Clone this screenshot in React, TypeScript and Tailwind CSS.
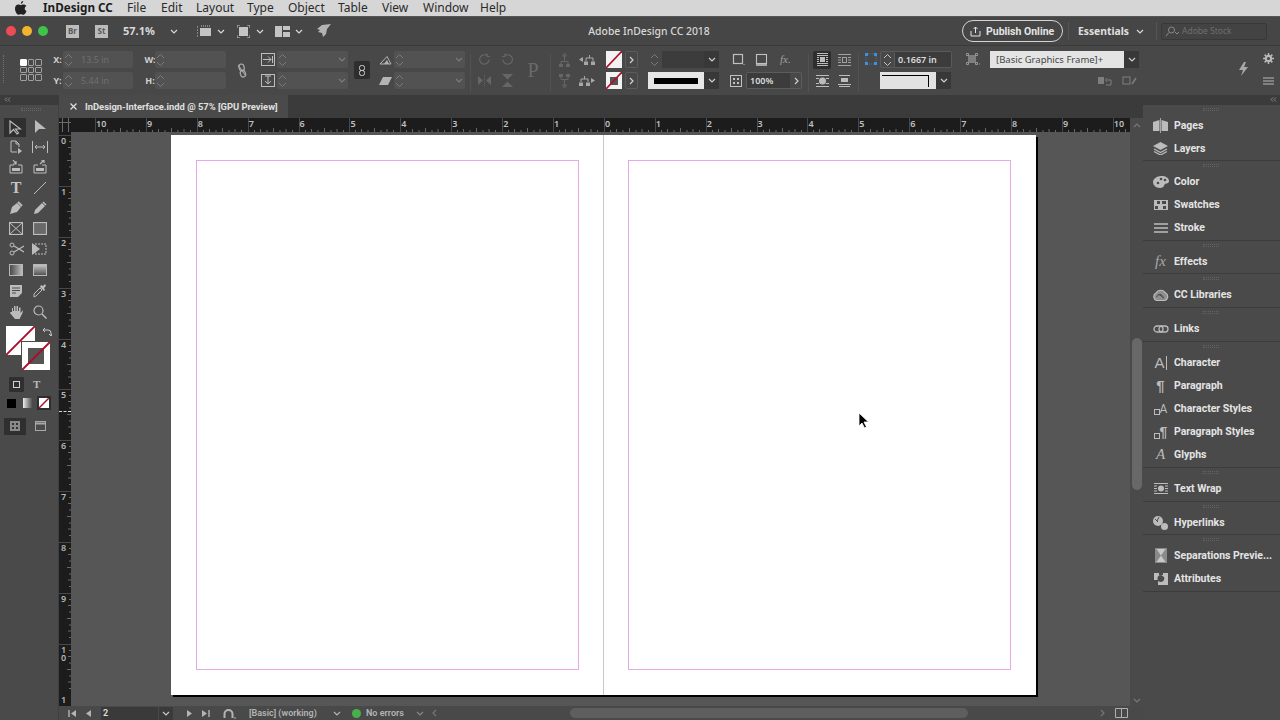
import type { ReactNode } from "react";

const menu: [string, number][] = [
  ["File", 34],
  ["Edit", 35],
  ["Layout", 51],
  ["Type", 41],
  ["Object", 50],
  ["Table", 44],
  ["View", 41],
  ["Window", 57],
  ["Help", 40],
];

function Svg({ w, h, children, className = "" }: { w: number; h: number; children: ReactNode; className?: string }) {
  return (
    <svg width={w} height={h} viewBox={`0 0 ${w} ${h}`} fill="none" stroke="currentColor" className={`shrink-0 ${className}`}>
      {children}
    </svg>
  );
}

function Chev({ className = "" }: { className?: string }) {
  return (
    <Svg w={8} h={5} className={className}>
      <path d="M1 1l3 3 3-3" strokeWidth="1.2" />
    </Svg>
  );
}

function Spin({ dim = false }: { dim?: boolean }) {
  return (
    <Svg w={9} h={14} className={dim ? "text-[#7a7a7a]" : "text-[#c4c4c4]"}>
      <path d="M1 5l3.5-3.5L8 5M1 9l3.5 3.5L8 9" strokeWidth="1" />
    </Svg>
  );
}

function Field({ w, value }: { w: string; value?: string }) {
  return (
    <div className={`h-[17px] ${w} bg-[#525252] rounded-[2px] flex items-center pl-[1px]`}>
      <Spin dim />
      {value && <span className="ml-[8px] text-[9px] text-[#6f6f6f]">{value}</span>}
    </div>
  );
}

function DropField({ w }: { w: string }) {
  return (
    <div className={`h-[17px] ${w} bg-[#525252] rounded-[2px] flex items-center justify-between pl-[1px] pr-[2px]`}>
      <Spin dim />
      <Chev className="text-[#7c7c7c]" />
    </div>
  );
}

function Sep({ className = "" }: { className?: string }) {
  return <div className={`w-[1px] h-[38px] bg-[#525252] self-center shrink-0 ${className}`} />;
}

function Pair({ className, children }: { className: string; children: ReactNode }) {
  return <div className={`flex flex-col gap-[4px] shrink-0 ${className}`}>{children}</div>;
}

function Cell({ children }: { children: ReactNode }) {
  return <div className="h-[17px] flex items-center justify-center">{children}</div>;
}

function NoneSwatch({ inner = false }: { inner?: boolean }) {
  return (
    <Svg w={16} h={17}>
      <rect width="16" height="17" fill="#f2f2f2" stroke="none" />
      {inner && <rect x="4" y="5" width="8" height="8" fill="#555" stroke="none" />}
      <path d="M0 17L16 0" stroke="#b0102a" strokeWidth="1.6" />
    </Svg>
  );
}

function ArrowBtn() {
  return (
    <div className="h-[17px] w-[13px] border border-[#5c5c5c] rounded-[2px] flex items-center justify-center text-[#d0d0d0]">
      <Svg w={5} h={8}>
        <path d="M1 1l3 3-3 3" strokeWidth="1.2" />
      </Svg>
    </div>
  );
}

function DarkChev() {
  return (
    <div className="h-[17px] w-[15px] bg-[#383838] flex items-center justify-center text-[#d0d0d0]">
      <Chev />
    </div>
  );
}

function TopBar() {
  return (
    <div className="h-[29px] bg-[#464646] border-b border-[#3a3a3a] flex items-center text-[#d8d8d8] font-['Noto_Sans',sans-serif]">
      <div className="flex gap-[6px] ml-[6px]">
        <div className="size-[10px] rounded-full bg-[#ee4b54]" />
        <div className="size-[10px] rounded-full bg-[#f2b32e]" />
        <div className="size-[10px] rounded-full bg-[#3fc34b]" />
      </div>
      <div className="ml-[18px] size-[13px] bg-[#bcbcbc] text-[#595959] text-[8px] font-bold flex items-center justify-center">Br</div>
      <div className="ml-[16px] size-[13px] bg-[#bcbcbc] text-[#595959] text-[8px] font-bold flex items-center justify-center">St</div>
      <span className="ml-[15px] w-[47px] text-[11px] font-bold">57.1%</span>
      <Chev />
      <Svg w={15} h={12} className="ml-[19px] text-[#c4c4c4]">
        <rect x="3" y="3" width="11" height="8" fill="currentColor" stroke="none" />
        <path d="M0 2h2M0 5h2M0 8h2M0 11h2M4 1h9" strokeDasharray="1 1" />
      </Svg>
      <Chev className="ml-[5px]" />
      <Svg w={13} h={13} className="ml-[12px] text-[#c4c4c4]">
        <rect x="2" y="2" width="9" height="9" fill="currentColor" stroke="none" />
        <path d="M0 3V0h3M10 0h3v3M13 10v3h-3M3 13H0v-3" />
      </Svg>
      <Chev className="ml-[6px]" />
      <Svg w={15} h={11} className="ml-[11px] text-[#c4c4c4]">
        <path d="M0 0h7v11H0zM8 0h7v4H8zM8 6h7v5H8z" fill="currentColor" stroke="none" />
      </Svg>
      <Chev className="ml-[5px]" />
      <Svg w={15} h={14} className="ml-[13px] text-[#b4b4b4]">
        <path d="M15 0L6 1 1 5l3 1-2 2 4 1 1 4 3-3 1-5z" fill="currentColor" stroke="none" />
      </Svg>
      <span className="ml-[257px] pt-[1px] text-[10.4px] w-[122px] text-center font-medium whitespace-nowrap">Adobe InDesign CC 2018</span>
      <div className="ml-[252px] w-[101px] h-[22px] border border-[#d4d4d4] rounded-full flex items-center pl-[7px] gap-[5px] text-[10.5px] font-bold text-[#e4e4e4] font-['Roboto',sans-serif]">
        <Svg w={11} h={11}>
          <path d="M1 5v5h9V5M5.5 7V1M3.5 3l2-2 2 2" />
        </Svg>
        <span className="pt-[1px]">Publish Online</span>
      </div>
      <div className="ml-[5px] w-[1px] h-[18px] bg-[#555]" />
      <span className="ml-[9px] pt-[1px] text-[10.3px] font-bold text-[#e0e0e0] w-[58px]">Essentials</span>
      <Chev />
      <div className="ml-[12px] w-[1px] h-[18px] bg-[#555]" />
      <div className="ml-[4px] w-[106px] h-[17px] bg-[#434343] border border-[#383838] rounded-[2px] flex items-center px-[3px] gap-[3px] text-[#8a8a8a]">
        <Svg w={14} h={11}>
          <circle cx="6.5" cy="4" r="3" />
          <path d="M4 6.5L1 10M10 6l2 2 2-2" />
        </Svg>
        <span className="text-[8.5px] text-[#6e6e6e]">Adobe Stock</span>
      </div>
    </div>
  );
}

function ControlPanel() {
  return (
    <div className="h-[49px] bg-[#484848] flex pt-[5px] text-[#c6c6c6] font-['Noto_Sans',sans-serif]">
      <div className="ml-[3px] w-[3px] h-[28px] mt-[4px] border-l border-dotted border-[#707070] shrink-0" />
      <div className="ml-[14px] mt-[8px] w-[22px] h-[22px] grid grid-cols-3 gap-[1px] shrink-0">
        {[0, 1, 2, 3, 4, 5, 6, 7, 8].map((i) => (
          <div key={i} className={`border border-[#a0a0a0] rounded-[1px] ${i === 0 ? "bg-white border-white" : ""}`} />
        ))}
      </div>
      <Pair className="ml-[10px] w-[11px] text-[9px] font-bold text-[#d0d0d0]">
        <Cell>X:</Cell>
        <Cell>Y:</Cell>
      </Pair>
      <Pair className="w-[70px]">
        <Field w="w-[70px]" value="13.5 in" />
        <Field w="w-[70px]" value="5.44 in" />
      </Pair>
      <Pair className="ml-[12px] w-[10px] text-[9px] font-bold text-[#d0d0d0]">
        <Cell>W:</Cell>
        <Cell>H:</Cell>
      </Pair>
      <Pair className="w-[71px]">
        <Field w="w-[71px]" />
        <Field w="w-[71px]" />
      </Pair>
      <div className="ml-[10px] w-[12px] flex items-center h-[38px] shrink-0 text-[#a8a8a8]">
        <Svg w={12} h={15}>
          <rect x="3" y="1" width="5" height="6.500" rx="2.500" transform="rotate(-15 6 4)" strokeWidth="1.300" />
          <rect x="4.500" y="7.500" width="5" height="6.500" rx="2.500" transform="rotate(-15 7 11)" strokeWidth="1.300" />
          <path d="M2 2l8 11" strokeWidth="1.100" />
        </Svg>
      </div>
      <Pair className="ml-[13px] w-[14px] text-[#bdbdbd]">
        <Cell>
          <Svg w={14} h={13}>
            <rect x="0.5" y="0.5" width="13" height="12" />
            <path d="M2 6.5h8M7 3.5l3 3-3 3M11.5 3v7" />
          </Svg>
        </Cell>
        <Cell>
          <Svg w={14} h={13}>
            <rect x="0.5" y="0.5" width="13" height="12" />
            <path d="M7 2v8M4 7l3 3 3-3M4 2h6" />
          </Svg>
        </Cell>
      </Pair>
      <Pair className="ml-[2px] w-[71px]">
        <DropField w="w-[71px]" />
        <DropField w="w-[71px]" />
      </Pair>
      <div className="ml-[6px] w-[16px] h-[18px] mt-[10px] bg-[#2e2e2e] rounded-[2px] flex items-center justify-center text-[#d0d0d0] shrink-0">
        <Svg w={6} h={11}>
          <rect x=".5" y=".5" width="5" height="5" rx="2" />
          <rect x=".5" y="5.500" width="5" height="5" rx="2" />
        </Svg>
      </div>
      <Pair className="ml-[9px] w-[13px] text-[#b4b4b4]">
        <Cell>
          <Svg w={13} h={10}>
            <path d="M1 9h11L8 1.5z" />
            <path d="M5 9l3-4 2 4z" fill="currentColor" stroke="none" />
          </Svg>
        </Cell>
        <Cell>
          <Svg w={13} h={10}>
            <path d="M4 1h9l-4 8H0z" fill="currentColor" stroke="none" />
          </Svg>
        </Cell>
      </Pair>
      <Pair className="ml-[2px] w-[71px]">
        <DropField w="w-[71px]" />
        <DropField w="w-[71px]" />
      </Pair>
      <Sep className="ml-[5px]" />
      <Pair className="ml-[7px] w-[13px] text-[#666]">
        <Cell>
          <Svg w={13} h={13}>
            <path d="M11 6.5a4.7 4.7 0 1 1-1.5-3.5M9 .5v3h3" strokeWidth="1.2" />
          </Svg>
        </Cell>
        <Cell>
          <Svg w={13} h={11}>
            <path d="M0 1v9l5-4.5zM13 1v9L8 5.5z" fill="currentColor" stroke="none" />
            <path d="M6.5 0v11" strokeDasharray="1 1" />
          </Svg>
        </Cell>
      </Pair>
      <Pair className="ml-[9px] w-[14px] text-[#666]">
        <Cell>
          <Svg w={13} h={13}>
            <path d="M2 6.5a4.7 4.7 0 1 0 1.5-3.5M4 .5v3H1" strokeWidth="1.2" />
          </Svg>
        </Cell>
        <Cell>
          <Svg w={13} h={13}>
            <path d="M1 0h11L6.5 5.5zM1 13h11L6.5 7.5z" fill="currentColor" stroke="none" />
          </Svg>
        </Cell>
      </Pair>
      <div className="ml-[8px] w-[22px] h-[38px] flex items-center justify-center text-[20px] text-[#6a6a6a] font-['Liberation_Serif',serif] shrink-0">P</div>
      <Sep className="ml-[6px]" />
      <Pair className="ml-[7px] w-[13px] text-[#666]">
        <Cell>
          <Svg w={11} h={14}>
            <path d="M5.500 0l2 3h-4zM5.500 3v5M2 11V8.500h7V11" />
            <path d="M0 11h4v3H0zM7 11h4v3H7z" fill="currentColor" stroke="none" />
          </Svg>
        </Cell>
        <Cell>
          <Svg w={11} h={14}>
            <path d="M5.500 14l2-3h-4zM5.500 11V6M2 3v2.500h7V3" />
            <path d="M0 0h4v3H0zM7 0h4v3H7z" fill="currentColor" stroke="none" />
          </Svg>
        </Cell>
      </Pair>
      <Pair className="ml-[7px] w-[17px] text-[#a8a8a8]">
        <Cell>
          <Svg w={16} h={10}>
            <path d="M4 2L0 4.500 4 7z" fill="currentColor" stroke="none" />
            <path d="M7 6V3h7v3M10.500 3V0" />
            <path d="M5 6.500h4V10H5zM12 6.500h4V10h-4z" fill="currentColor" stroke="none" />
          </Svg>
        </Cell>
        <Cell>
          <Svg w={16} h={10}>
            <path d="M12 2l4 2.500L12 7z" fill="currentColor" stroke="none" />
            <path d="M2 6V3h7v3M5.500 3V0" />
            <path d="M0 6.500h4V10H0zM7 6.500h4V10H7z" fill="currentColor" stroke="none" />
          </Svg>
        </Cell>
      </Pair>
      <Pair className="ml-[11px] w-[16px]">
        <NoneSwatch />
        <NoneSwatch inner />
      </Pair>
      <Pair className="ml-[3px] w-[13px]">
        <ArrowBtn />
        <ArrowBtn />
      </Pair>
      <Pair className="ml-[10px] w-[71px]">
        <div className="h-[17px] flex items-center">
          <div className="w-[14px] flex justify-center">
            <Spin dim />
          </div>
          <div className="w-[43px] h-[17px] bg-[#3c3c3c]" />
          <DarkChev />
        </div>
        <div className="h-[17px] flex items-center">
          <div className="w-[56px] h-[17px] bg-[#e6e6e6] flex items-center justify-center">
            <div className="w-[44px] h-[6px] bg-black" />
          </div>
          <DarkChev />
        </div>
      </Pair>
      <Pair className="ml-[11px] w-[72px] text-[#c0c0c0]">
        <div className="h-[17px] flex items-center pl-[2px] gap-[10px]">
          <Svg w={13} h={13}>
            <rect x="1.500" y="1.500" width="9" height="9" strokeWidth="1.200" />
            <path d="M11.500 11.500h1" />
          </Svg>
          <Svg w={13} h={13}>
            <rect x="1.500" y="1.500" width="10" height="9" strokeWidth="1.100" />
            <path d="M1 12h11" strokeWidth="1.600" />
          </Svg>
          <span className="text-[11px] italic text-[#a0a0a0] font-['Liberation_Serif',serif] ml-[2px]">fx.</span>
        </div>
        <div className="h-[17px] flex items-center">
          <Svg w={12} h={12}>
            <rect x="0.5" y="0.5" width="11" height="11" />
            <path d="M3 3h2v2H3zM7 3h2v2H7zM3 7h2v2H3zM7 7h2v2H7z" fill="currentColor" stroke="none" />
          </Svg>
          <div className="ml-[4px] w-[56px] h-[17px] border border-[#5c5c5c] rounded-[2px] flex items-center">
            <span className="w-[43px] h-full bg-[#3c3c3c] pl-[3px] text-[9px] font-semibold text-[#dcdcdc] leading-[15px]">100%</span>
            <Svg w={5} h={8} className="ml-[4px] text-[#d0d0d0]">
              <path d="M1 1l3 3-3 3" strokeWidth="1.2" />
            </Svg>
          </div>
        </div>
      </Pair>
      <Sep className="ml-[6px]" />
      <Pair className="ml-[4px] w-[40px] text-[#bcbcbc]">
        <div className="h-[17px] flex items-center">
          <div className="w-[18px] h-[18px] bg-[#2e2e2e] rounded-[2px] flex items-center justify-center">
            <Svg w={11} h={13}>
              <path d="M0 .5h11M0 2.500h11M0 10.500h11M0 12.500h11M0 4.500h2M0 6.500h2M0 8.500h2M9 4.500h2M9 6.500h2M9 8.500h2" />
              <rect x="3" y="4" width="5" height="5" fill="currentColor" stroke="none" />
            </Svg>
          </div>
          <Svg w={13} h={12} className="ml-[7px] text-[#a0a0a0]">
            <path d="M0 .5h13M0 11.500h13M0 3.500h3M0 6h3M0 8.500h3M10 3.500h3M10 6h3M10 8.500h3" />
            <rect x="4.500" y="3.500" width="4" height="5" />
          </Svg>
        </div>
        <div className="h-[17px] flex items-center">
          <Svg w={13} h={12} className="ml-[3px]">
            <path d="M0 .5h13M0 11.500h13M0 3.500h3M0 8.500h3M10 3.500h3M10 8.500h3" />
            <circle cx="6.500" cy="6" r="3.500" fill="currentColor" stroke="none" />
          </Svg>
          <Svg w={13} h={12} className="ml-[9px]">
            <path d="M1 .5h11M1 11.500h11M0 9.500h13" />
            <rect x="3" y="3" width="7" height="4" fill="currentColor" stroke="none" />
          </Svg>
        </div>
      </Pair>
      <Sep className="ml-[5px]" />
      <div className="ml-[6px] mt-[2px] shrink-0 text-[#3f8fe0]">
        <Svg w={12} h={12}>
          <path d="M1 1h10v10H1z" strokeDasharray="1 1" opacity=".6" />
          <path d="M0 0h3v3H0zM9 0h3v3H9zM0 9h3v3H0zM9 9h3v3H9z" fill="currentColor" stroke="none" />
        </Svg>
      </div>
      <Pair className="ml-[3px] w-[72px]">
        <div className="h-[17px] border border-[#5a5a5a] rounded-[2px] flex items-center">
          <div className="w-[14px] flex justify-center border-r border-[#5a5a5a]">
            <Spin />
          </div>
          <div className="h-[15px] flex-1 bg-[#3c3c3c] pl-[3px] text-[9px] font-semibold text-[#dcdcdc] leading-[15px]">0.1667 in</div>
        </div>
        <div className="h-[17px] flex items-center">
          <div className="w-[56px] h-[17px] bg-[#e2e2e2] pl-[2px] pt-[3px] pr-[7px]">
            <div className="h-[12px] border-t border-r border-black" />
          </div>
          <DarkChev />
        </div>
      </Pair>
      <div className="ml-[14px] mt-[2px] shrink-0 text-[#969696]">
        <Svg w={14} h={13}>
          <rect x="2" y="2" width="8" height="8" fill="currentColor" stroke="none" opacity=".7" />
          <path d="M.5.5h2v2h-2zM9.500.5h2v2h-2zM.5 9.500h2v2h-2zM9.500 9.500h2v2h-2zM13 11h1" />
        </Svg>
      </div>
      <Pair className="ml-[10px] w-[149px]">
        <div className="h-[17px] flex">
          <div className="w-[134px] bg-[#e4e4e4] pl-[6px] text-[9.5px] text-[#444] leading-[17px]">[Basic Graphics Frame]+</div>
          <DarkChev />
        </div>
        <div className="h-[17px] flex items-center text-[#7e7e7e] pl-[108px] gap-[9px]">
          <Svg w={15} h={11}>
            <rect x="0" y="2" width="6" height="7" fill="currentColor" stroke="none" />
            <path d="M9 5h4v5H8M9 3L7.500 5 9 7" />
          </Svg>
          <Svg w={15} h={11}>
            <rect x="1" y="2" width="7" height="7" />
            <path d="M10 9l4-6" strokeWidth="1.5" />
          </Svg>
        </div>
      </Pair>
      <div className="ml-[100px] w-[12px] mt-[11px] shrink-0 text-[#a8a8a8]">
        <Svg w={10} h={14}>
          <path d="M5 0L0 8h4l-2 6 7-9H5l2-5z" fill="currentColor" stroke="none" />
        </Svg>
      </div>
      <div className="ml-[10px] w-[14px] h-[36px] flex flex-col items-center justify-between py-[2px] text-[#b8b8b8] shrink-0">
        <Svg w={11} h={11}>
          <circle cx="5.500" cy="5.500" r="2.700" strokeWidth="2.200" />
          <path d="M5.500 0v2M5.500 9v2M0 5.500h2M9 5.500h2M1.600 1.600L3 3M8 8l1.400 1.400M1.600 9.400L3 8M8 3l1.400-1.400" strokeWidth="1.500" />
        </Svg>
        <Svg w={11} h={8}>
          <path d="M0 1h11M0 4h11M0 7h11" />
        </Svg>
      </div>
    </div>
  );
}

function ToolIcon({ children }: { children: ReactNode }) {
  return <div className="w-[24px] flex items-center justify-center">{children}</div>;
}

const toolRows: { h: string; icons: [ReactNode, ReactNode] }[] = [
  {
    h: "h-[20px]",
    icons: [
      <Svg w={14} h={15} key="a"><path d="M2 1v12l3.500-3.500L9 14l1.500-1-3-4h5z" strokeWidth="1.200" /></Svg>,
      <Svg w={12} h={14} key="b"><path d="M1 0v13l4-4h7z" fill="currentColor" stroke="none" /></Svg>,
    ],
  },
  {
    h: "h-[19px]",
    icons: [
      <Svg w={14} h={14} key="a"><path d="M8 12H2V1h5l3 3v3M7 1v3h3" /><path d="M9 8v6l4-3z" fill="currentColor" stroke="none" /></Svg>,
      <Svg w={16} h={12} key="b"><path d="M.5 0v12M15.500 0v12M3 6h10M5 4L3 6l2 2M11 4l2 2-2 2" /></Svg>,
    ],
  },
  {
    h: "h-[21px]",
    icons: [
      <Svg w={14} h={14} key="a"><path d="M1 5v8h12V5H9M5 5H1" /><path d="M3 8h8v3H3z" fill="currentColor" stroke="none" /><path d="M4 0l3 4M7 1v3H4" strokeWidth="1.200" /></Svg>,
      <Svg w={14} h={14} key="b"><path d="M1 5v8h12V5H9M5 5H1" /><path d="M3 8h8v3H3z" fill="currentColor" stroke="none" /><path d="M7 4l4-4M8 0h3v3" strokeWidth="1.200" /></Svg>,
    ],
  },
  {
    h: "h-[21px]",
    icons: [
      <span key="a" className="text-[16px] leading-none font-bold text-[#c4c4c4] font-['Liberation_Serif',serif]">T</span>,
      <Svg w={12} h={12} key="b"><path d="M0 12L12 0" /></Svg>,
    ],
  },
  {
    h: "h-[20px]",
    icons: [
      <Svg w={14} h={14} key="a"><path d="M1 13l2-7 5-4 4 4-4 5z" fill="currentColor" stroke="none" /><path d="M9 1l4 4" strokeWidth="2" /></Svg>,
      <Svg w={14} h={14} key="b"><path d="M1 13l1-4 7-7 3 3-7 7z" fill="currentColor" stroke="none" /><path d="M10 1l3 3" strokeWidth="1.500" /></Svg>,
    ],
  },
  {
    h: "h-[20px]",
    icons: [
      <Svg w={14} h={13} key="a"><rect x=".5" y=".5" width="13" height="12" strokeWidth="1.200" /><path d="M1 1l12 11M13 1L1 12" /></Svg>,
      <Svg w={14} h={13} key="b"><rect x=".5" y=".5" width="13" height="12" fill="#6a6a6a" strokeWidth="1.200" /></Svg>,
    ],
  },
  {
    h: "h-[21px]",
    icons: [
      <Svg w={15} h={14} key="a"><circle cx="3" cy="3" r="2" /><circle cx="3" cy="11" r="2" /><path d="M5 4l10 6M5 10l10-6" strokeWidth="1.200" /></Svg>,
      <Svg w={16} h={14} key="b"><rect x="3" y="2" width="11" height="10" strokeDasharray="2 1" /><path d="M0 1l8 6-8 6z" fill="currentColor" stroke="none" /></Svg>,
    ],
  },
  {
    h: "h-[21px]",
    icons: [
      <div key="a" className="w-[14px] h-[12px] border border-[#b8b8b8] bg-gradient-to-r from-[#4a4a4a] to-[#bdbdbd]" />,
      <div key="b" className="w-[14px] h-[12px] border border-[#b8b8b8] bg-gradient-to-b from-[#c4c4c4] to-[#555]" />,
    ],
  },
  {
    h: "h-[22px]",
    icons: [
      <Svg w={12} h={12} key="a"><path d="M0 0h12v8l-4 4H0z" fill="currentColor" stroke="none" /><path d="M2 3h8M2 5.500h8M2 8h4" stroke="#4a4a4a" /></Svg>,
      <Svg w={14} h={14} key="b"><path d="M1 13l2-1 6-6-2-2-6 6z" /><path d="M7 3l4 4 1-1-1-2 2-2-1-2-2 2-2-1z" fill="currentColor" stroke="none" /></Svg>,
    ],
  },
  {
    h: "h-[19px]",
    icons: [
      <Svg w={14} h={14} key="a"><path d="M3 7V3h1v3h1V1h1.500v5h1V1H9v5h1V2.500h1.500V8L14 5l-.5 3-3 6H6L1 8l.5-1z" fill="currentColor" stroke="none" /></Svg>,
      <Svg w={14} h={14} key="b"><circle cx="5.500" cy="5.500" r="4.500" strokeWidth="1.200" /><path d="M9 9l4.500 4.500" strokeWidth="1.500" /></Svg>,
    ],
  },
];

function ToolPanel() {
  return (
    <div className="flex-1 bg-[#4a4a4a] border-r border-[#404040] text-[#bcbcbc] pl-[4px] relative font-['Noto_Sans',sans-serif]">
      <div className="w-[20px] mx-auto mt-[3px] mb-[6px] h-[3px] border-y border-dotted border-[#666]" />
      <div className="flex flex-col">
        {toolRows.map((row, i) => (
          <div key={i} className={`flex items-center ${row.h}`}>
            <ToolIcon>{row.icons[0]}</ToolIcon>
            <ToolIcon>{row.icons[1]}</ToolIcon>
          </div>
        ))}
      </div>
      <div className="absolute left-[4px] top-[13px] w-[22px] h-[19px] bg-[#2f2f2f] flex items-center justify-center">
        <Svg w={14} h={15}>
          <path d="M2 1v12l3.500-3.500L9 14l1.500-1-3-4h5z" strokeWidth="1.200" />
        </Svg>
      </div>
      <div className="mt-[5px] ml-[2px]">
        <Svg w={46} h={46}>
          <rect x="0" y="0" width="29" height="29" fill="#fff" stroke="none" />
          <path d="M0 29L29 0" stroke="#a80f26" strokeWidth="1.800" />
          <rect x="15.500" y="15.500" width="29" height="29" fill="#fff" stroke="#4a4a4a" />
          <rect x="22" y="22" width="16" height="16" fill="#555" stroke="none" />
          <path d="M16 44L44 16" stroke="#a80f26" strokeWidth="1.800" />
        </Svg>
      </div>
      <div className="flex items-center h-[18px] mt-[3px] pl-[5px] gap-[9px]">
        <div className="size-[15px] bg-[#2f2f2f] flex items-center justify-center rounded-[1px]">
          <div className="size-[7px] border border-[#d0d0d0]" />
        </div>
        <span className="text-[11px] font-bold font-['Liberation_Serif',serif]">T</span>
      </div>
      <div className="flex items-center h-[18px] mt-[1px] pl-[3px]">
        <div className="size-[9px] bg-black" />
        <div className="ml-[7px] w-[10px] h-[10px] bg-gradient-to-r from-[#eee] to-[#444]" />
        <div className="ml-[4px] size-[14px] bg-[#2f2f2f] flex items-center justify-center">
          <NoneMini />
        </div>
      </div>
      <div className="flex items-center h-[20px] mt-[4px]">
        <div className="w-[22px] h-[17px] bg-[#2f2f2f] flex items-center justify-center">
          <Svg w={10} h={10}>
            <rect width="10" height="10" fill="#8a8a8a" stroke="none" />
            <path d="M2 2h2v2H2zM6 2h2v2H6zM2 6h2v2H2zM6 6h2v2H6z" fill="#333" stroke="none" />
          </Svg>
        </div>
        <Svg w={12} h={11} className="ml-[9px] text-[#a8a8a8]">
          <rect x=".5" y=".5" width="10" height="9" />
          <path d="M1 2.500h9" strokeWidth="2" />
        </Svg>
      </div>
      <div className="absolute left-[42px] top-[222px] text-[#c8c8c8]">
        <Svg w={10} h={10}>
          <path d="M1 3h5a3 3 0 0 1 3 3v3M3 1L1 3l2 2M7 7l2 2 1-2" />
        </Svg>
      </div>
    </div>
  );
}

function NoneMini() {
  return (
    <Svg w={10} h={10}>
      <rect width="10" height="10" fill="#fff" stroke="none" />
      <path d="M0 10L10 0" stroke="#b0102a" strokeWidth="1.500" />
    </Svg>
  );
}

const hRuler = ["10", "9", "8", "7", "6", "5", "4", "3", "2", "1", "0", "1", "2", "3", "4", "5", "6", "7", "8", "9", "10"];
const vRuler = ["0", "1", "2", "3", "4", "5", "6", "7", "8", "9", "10"];

function HTicks() {
  return (
    <svg width="51" height="14" className="absolute left-0 top-0" stroke="#686868">
      <path d="M6.500 14v-2M12.500 14v-3M19 14v-2M25.500 14v-4M32 14v-2M38 14v-3M44.500 14v-2" />
      <path d="M.5 14V0" stroke="#484848" />
    </svg>
  );
}

function VTicks() {
  return (
    <svg width="12" height="51" className="absolute left-0 top-0" stroke="#686868">
      <path d="M10 6.500h2M9 12.500h3M10 19h2M8 25.500h4M10 32h2M9 38h3M10 44.500h2" />
      <path d="M0 .5h12" stroke="#484848" />
    </svg>
  );
}

function Workspace() {
  return (
    <div className="flex-1 flex flex-col min-w-0 font-['Noto_Sans',sans-serif]">
      <div className="h-[23px] bg-[#3b3b3b] shrink-0 flex">
        <div className="w-[229px] bg-[#4a4a4a] flex items-center pl-[11px] text-[#e0e0e0]">
          <Svg w={7} h={7}>
            <path d="M.5.5l6 6M6.500.5l-6 6" strokeWidth="1.200" />
          </Svg>
          <span className="ml-[8px] pt-[1px] text-[9.4px] font-bold whitespace-nowrap font-['Roboto',sans-serif]">InDesign-Interface.indd @ 57% [GPU Preview]</span>
        </div>
      </div>
      <div className="h-[14px] flex shrink-0">
        <div className="w-[12px] bg-[#1c1c1c] relative text-[#6a6a6a]">
          <Svg w={12} h={14}>
            <path d="M0 4.500h12M3.500 0v14M9.500 0v14" />
          </Svg>
        </div>
        <div className="w-[1059px] bg-[#1c1c1c] flex overflow-hidden pl-[24px] text-[#c0c0c0]">
          {hRuler.map((n, i) => (
            <div key={i} className="w-[50.9px] shrink-0 relative text-[9px] font-semibold leading-[12px] pl-[1px]">
              <HTicks />
              <span className="relative">{n}</span>
            </div>
          ))}
        </div>
        <div className="w-[13px] bg-[#4a4a4a] flex items-center justify-center text-[#777]">
          <Svg w={8} h={5}>
            <path d="M1 4l3-3 3 3" strokeWidth="1.200" />
          </Svg>
        </div>
      </div>
      <div className="flex-1 flex min-h-0">
        <div className="w-[12px] bg-[#1c1c1c] pt-[3px] overflow-hidden text-[#b4b4b4] shrink-0 relative">
          {vRuler.map((n) => (
            <div key={n} className="h-[50.9px] relative pl-[2px] pt-[2px] text-[9px] font-semibold leading-[8px]">
              <VTicks />
              <span className="relative block w-[6px] break-all">{n}</span>
            </div>
          ))}
          <div className="h-[14px] pl-[2px] text-[9px] leading-[9px] font-semibold">1</div>
          <div className="absolute left-0 top-[279px] w-[12px] border-t border-dashed border-[#d8d8d8]" />
        </div>
        <div className="flex-1 bg-[#565656] pl-[100px] pt-[3px] overflow-hidden relative">
          <div className="w-[865px] h-[560px] bg-white flex shadow-[2px_2px_0_#000]">
            <div className="w-[433px] h-full pt-[25px] pl-[25px] pr-[24px] pb-[25px] border-r border-[#c8c8c8]">
              <div className="w-full h-full border border-[#e6a8e6]" />
            </div>
            <div className="w-[432px] h-full pt-[25px] pl-[24px] pr-[25px] pb-[25px]">
              <div className="w-full h-full border border-[#e6a8e6]" />
            </div>
          </div>
          <div className="absolute left-[787px] top-[280px] text-black">
            <svg width="12" height="17" viewBox="0 0 12 17">
              <path d="M1 1v13l3-3 2.500 5 2-1-2.500-5h4.500z" fill="#000" stroke="#fff" strokeWidth=".8" />
            </svg>
          </div>
        </div>
        <div className="w-[13px] bg-[#4a4a4a] shrink-0 flex flex-col items-center relative text-[#777]">
          <div className="w-[10px] h-[152px] bg-[#686868] rounded-full mt-[206px]" />
          <Svg w={8} h={5} className="mt-auto mb-[3px]">
            <path d="M1 1l3 3 3-3" strokeWidth="1.200" />
          </Svg>
        </div>
      </div>
      <div className="h-[14px] bg-[#494949] shrink-0 flex items-center text-[#b4b4b4] text-[8.5px] font-semibold font-['Roboto',sans-serif]">
        <Svg w={9} h={7} className="ml-[9px]">
          <path d="M1 0v7" strokeWidth="1.400" />
          <path d="M8 0v7L3 3.500z" fill="currentColor" stroke="none" />
        </Svg>
        <Svg w={6} h={7} className="ml-[9px]">
          <path d="M5 0v7L0 3.500z" fill="currentColor" stroke="none" />
        </Svg>
        <div className="ml-[9px] w-[57px] h-[13px] bg-[#3a3a3a] pl-[2px] text-[9px] text-[#e0e0e0] leading-[13px]">2</div>
        <div className="w-[14px] h-[13px] bg-[#3a3a3a] ml-[1px] flex items-center justify-center text-[#c8c8c8]">
          <Chev />
        </div>
        <Svg w={6} h={7} className="ml-[13px]">
          <path d="M1 0v7l5-3.500z" fill="currentColor" stroke="none" />
        </Svg>
        <Svg w={9} h={7} className="ml-[9px]">
          <path d="M8 0v7" strokeWidth="1.400" />
          <path d="M1 0v7l5-3.500z" fill="currentColor" stroke="none" />
        </Svg>
        <Svg w={13} h={11} className="ml-[13px]">
          <path d="M1.500 10V6a4 4 0 0 1 8 0v4" strokeWidth="2" />
          <path d="M11 10h2" />
        </Svg>
        <span className="ml-[13px] pt-[1px] w-[80px] text-[9px] whitespace-nowrap">[Basic] (working)</span>
        <Chev className="ml-[4px]" />
        <div className="ml-[11px] size-[9px] rounded-full bg-[#46b04a]" />
        <span className="ml-[5px] pt-[1px] w-[48px] text-[9px] whitespace-nowrap">No errors</span>
        <Chev className="ml-[2px] text-[#888]" />
        <Svg w={5} h={8} className="ml-[8px] text-[#777]">
          <path d="M4 1L1 4l3 3" strokeWidth="1.200" />
        </Svg>
        <div className="ml-[72px] flex-1 flex items-center h-[14px] bg-[#494949]">
          <div className="ml-[61px] w-[398px] h-[10px] rounded-full bg-[#5e5e5e]" />
        </div>
        <Svg w={5} h={8} className="mr-[10px] text-[#777]">
          <path d="M1 1l3 3-3 3" strokeWidth="1.200" />
        </Svg>
        <Svg w={13} h={10} className="mr-[15px] text-[#b0b0b0]">
          <path d="M.5.5h12v9H.5zM6.500.5v9" />
        </Svg>
      </div>
    </div>
  );
}

function CircleIcon({ children }: { children: ReactNode }) {
  return <div className="w-[23px] flex items-center justify-center text-[#bcbcbc] shrink-0">{children}</div>;
}

const panelGroups: { h: string; rows: [ReactNode, string][] }[] = [
  {
    h: "h-[56px]",
    rows: [
      [<Svg w={15} h={15} key="i"><path d="M0 4l6.500-2v11L0 13zM15 4L8.500 2v11l6.500 0z" fill="currentColor" stroke="none" /><path d="M7.500 0v15" strokeWidth=".8" /></Svg>, "Pages"],
      [<Svg w={15} h={13} key="i"><path d="M7.500 0L15 4 7.500 8 0 4z" fill="currentColor" stroke="none" /><path d="M1 7l6.500 3.500L14 7M1 9.500L7.500 13 14 9.500" strokeWidth="1.300" /></Svg>, "Layers"],
    ],
  },
  {
    h: "h-[80px]",
    rows: [
      [<Svg w={16} h={12} key="i"><path d="M8 0c5 0 8 2 8 5s-3 2-4 3-1 4-5 4-7-3-7-6 4-6 8-6z" fill="currentColor" stroke="none" /><circle cx="5" cy="7" r="1.300" fill="#4a4a4a" stroke="none" /><circle cx="8" cy="3" r="1.300" fill="#4a4a4a" stroke="none" /><circle cx="12" cy="4" r="1.300" fill="#4a4a4a" stroke="none" /></Svg>, "Color"],
      [<Svg w={14} h={10} key="i"><rect width="14" height="10" fill="currentColor" stroke="none" /><path d="M3 1h3v3H3zM8 1h4v3H8zM1 6h3v3H1zM9 6h3v3H9z" fill="#4a4a4a" stroke="none" /></Svg>, "Swatches"],
      [<Svg w={14} h={10} key="i"><path d="M0 1h14M0 5h14M0 9h14" strokeWidth="1.500" /></Svg>, "Stroke"],
    ],
  },
  {
    h: "h-[33px]",
    rows: [[<span key="i" className="text-[15px] italic font-['Liberation_Serif',serif] text-[#a8a8a8] leading-none">fx</span>, "Effects"]],
  },
  {
    h: "h-[34px]",
    rows: [[<Svg w={17} h={12} key="i"><path d="M5 11.500a4 4 0 0 1-1-7.500 5.500 5.500 0 0 1 9.500 0 4 4 0 0 1-1 7.500z" fill="#8e8e8e" strokeWidth="1.200" /><path d="M4.500 8c2-3.500 5-3.500 7 .5M6 5.500c2 0 4 2 5.500 4" stroke="#4a4a4a" /></Svg>, "CC Libraries"]],
  },
  {
    h: "h-[34px]",
    rows: [[<Svg w={16} h={8} key="i"><rect x="1" y="1" width="9" height="6" rx="3" strokeWidth="1.300" /><rect x="6" y="1" width="9" height="6" rx="3" strokeWidth="1.300" /></Svg>, "Links"]],
  },
  {
    h: "h-[126px]",
    rows: [
      [<div key="i" className="flex items-center"><span className="text-[15px] leading-none text-[#bcbcbc] font-['Liberation_Sans',sans-serif]">A</span><div className="ml-[1px] w-[1px] h-[14px] bg-[#bcbcbc]" /></div>, "Character"],
      [<span key="i" className="text-[15px] leading-none font-bold font-['Liberation_Sans',sans-serif]">¶</span>, "Paragraph"],
      [<div key="i" className="flex items-end"><div className="size-[6px] border border-[#bcbcbc]" /><span className="text-[12px] leading-none">A</span></div>, "Character Styles"],
      [<div key="i" className="flex items-end"><div className="size-[6px] border border-[#bcbcbc]" /><span className="text-[14px] leading-none font-bold font-['Liberation_Sans',sans-serif]">¶</span></div>, "Paragraph Styles"],
      [<span key="i" className="text-[15px] italic leading-none font-['Liberation_Serif',serif]">A</span>, "Glyphs"],
    ],
  },
  {
    h: "h-[34px]",
    rows: [[<Svg w={14} h={11} key="i"><path d="M0 .5h14M0 10.500h14M0 3h3M0 5.500h3M0 8h3M11 3h3M11 5.500h3M11 8h3" /><circle cx="7" cy="5.500" r="3" fill="currentColor" stroke="none" /></Svg>, "Text Wrap"]],
  },
  {
    h: "h-[33px]",
    rows: [[<Svg w={15} h={14} key="i"><circle cx="5" cy="5" r="5" fill="currentColor" stroke="none" /><circle cx="11.500" cy="10.500" r="3.500" fill="currentColor" stroke="none" /><path d="M2 3l3 3M6 1L4 5" stroke="#4a4a4a" /></Svg>, "Hyperlinks"]],
  },
  {
    h: "h-[57px]",
    rows: [
      [<Svg w={12} h={15} key="i"><rect width="12" height="15" fill="#8a8a8a" stroke="none" /><path d="M1.500 1h9L6 7.500zM1.500 14h9L6 7.500z" fill="#c8c8c8" stroke="none" /></Svg>, "Separations Previe..."],
      [<Svg w={14} h={12} key="i"><path d="M0 0h5v2h4V0h5v12H4V7H0z" fill="currentColor" stroke="none" /><path d="M7 2a3.500 3.500 0 0 0 0 7 3.500 3.500 0 0 0 3-5z" fill="#4a4a4a" stroke="none" /></Svg>, "Attributes"],
    ],
  },
];

function RightPanel() {
  return (
    <div className="flex-1 bg-[#4a4a4a] font-['Roboto',sans-serif] flex flex-col">
      {panelGroups.map((g, i) => (
        <div key={i} className={`${g.h} border-b border-[#3c3c3c] pt-[9px] relative shrink-0`}>
          <div className="absolute left-[60px] top-[3px] w-[16px] h-[3px] border-y border-dotted border-[#626262]" />
          {g.rows.map(([icon, label]) => (
            <div key={label} className="h-[23px] flex items-center pl-[6px]">
              <CircleIcon>{icon}</CircleIcon>
              <span className="ml-[2px] text-[10.5px] font-bold text-[#e4e4e4] whitespace-nowrap">{label}</span>
            </div>
          ))}
        </div>
      ))}
    </div>
  );
}

function Collapse() {
  return (
    <Svg w={7} h={5} className="text-[#888]">
      <path d="M3 .5L1 2.500l2 2M6 .5L4 2.500l2 2" />
    </Svg>
  );
}

export default function App() {
  return (
    <div className="w-[1280px] h-[720px] overflow-hidden flex flex-col bg-[#3c3c3c]">
      <div className="h-[17px] bg-[#d6d6d6] border-b border-[#555] flex items-center text-[12px] text-[#2a2a2a] font-['Noto_Sans',sans-serif] shrink-0">
        <svg width="12" height="14" viewBox="0 0 12 14" className="ml-[15px] mr-[16px]">
          <path d="M8.200 0c.1 1.300-1 2.700-2.400 2.700C5.700 1.300 7 .1 8.200 0zM11.500 10c-.8 2-2 3.800-3.200 3.800-1 0-1.300-.6-2.500-.6s-1.600.6-2.500.6C2 13.800 0 10.500 0 7.600 0 5 1.700 3.500 3.300 3.500c1 0 1.900.7 2.500.7s1.600-.8 2.800-.7c.5 0 1.900.2 2.800 1.500-2.400 1.500-2 4.200.1 5z" fill="#222" />
        </svg>
        <span className="w-[84px] font-bold text-[11.7px] text-[#1c1c1c] whitespace-nowrap">InDesign CC</span>
        {menu.map(([label, w]) => (
          <span key={label} style={{ width: w }} className="whitespace-nowrap">{label}</span>
        ))}
      </div>
      <TopBar />
      <ControlPanel />
      <div className="flex-1 flex min-h-0">
        <div className="w-[59px] shrink-0 flex flex-col">
          <div className="h-[10px] bg-[#3b3b3b] pl-[4px] pt-[2px]">
            <Collapse />
          </div>
          <ToolPanel />
        </div>
        <Workspace />
        <div className="w-[137px] shrink-0 flex flex-col">
          <div className="h-[10px] bg-[#3b3b3b] flex justify-end pr-[3px] pt-[2px]">
            <Collapse />
          </div>
          <RightPanel />
        </div>
      </div>
    </div>
  );
}
